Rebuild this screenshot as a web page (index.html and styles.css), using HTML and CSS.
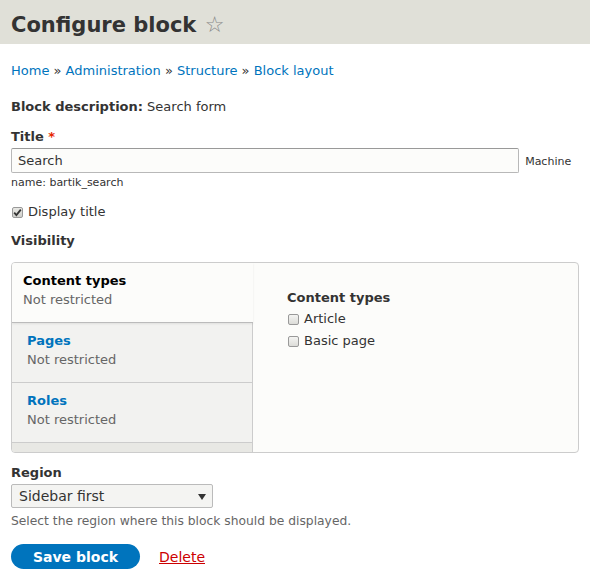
FILE: index.html
```html
<!DOCTYPE html>
<html lang="en">
<head>
  <meta charset="UTF-8">
  <title>Configure block</title>
  <link rel="stylesheet" href="styles.css">
</head>
<body>
  <div class="page-header">
    <h1>Configure block <span class="star">&#9734;</span></h1>
  </div>
  <div class="content">
    <div class="breadcrumb">
      <a href="#">Home</a> &raquo; <a href="#">Administration</a> &raquo; <a href="#">Structure</a> &raquo; <a href="#">Block layout</a>
    </div>

    <div class="item"><strong>Block description:</strong> Search form</div>

    <div class="form-item">
      <label class="label">Title <span class="req">*</span></label>
      <div class="title-line">
        <input type="text" class="text" value="Search">
        <span class="machine">Machine name: bartik_search</span>
      </div>
    </div>

    <div class="check-line">
      <span class="cbox checked"><svg width="9" height="9" viewBox="0 0 9 9"><path d="M1.2 4.6 L3.4 7 L7.8 1.6" fill="none" stroke="#333" stroke-width="1.8"/></svg></span>
      <label>Display title</label>
    </div>

    <div class="label vis">Visibility</div>

    <div class="vtabs">
      <ul class="vtabs-menu">
        <li class="tab selected"><strong>Content types</strong><span>Not restricted</span></li>
        <li class="tab"><strong>Pages</strong><span>Not restricted</span></li>
        <li class="tab"><strong>Roles</strong><span>Not restricted</span></li>
      </ul>
      <div class="vtabs-pane">
        <div class="pane-title">Content types</div>
        <div class="opt"><span class="cbox"></span><label>Article</label></div>
        <div class="opt"><span class="cbox"></span><label>Basic page</label></div>
      </div>
    </div>

    <div class="form-item region">
      <label class="label">Region</label>
      <div class="select">Sidebar first <span class="arrow"></span></div>
      <div class="desc">Select the region where this block should be displayed.</div>
    </div>

    <div class="actions">
      <button class="btn">Save block</button>
      <a href="#" class="delete">Delete</a>
    </div>
  </div>
</body>
</html>
```

FILE: styles.css
```css
body { margin: 0; font-family: "DejaVu Sans", sans-serif; font-size: 13px; color: #333; background: #fff; }
a { color: #0074bd; text-decoration: none; }
.page-header { background: #e0e0d8; height: 44px; padding: 0 11px; }
.page-header h1 { margin: 0; font-size: 21px; font-weight: bold; line-height: 49px; color: #333; }
.star { font-weight: normal; color: #888; font-size: 22px; margin-left: 1px; }
.content { padding: 0 11px; }
.breadcrumb { margin-top: 19px; line-height: 16px; color: #333; }
.item { margin-top: 20px; line-height: 16px; }
.item strong { font-weight: bold; }
.form-item { margin-top: 14px; }
.label { display: block; font-weight: bold; line-height: 16px; }
.req { color: #e62600; }
.title-line { margin-top: 3px; line-height: 18px; }
.text { width: 508px; height: 25px; box-sizing: border-box; margin: 0; padding: 2px 6px; font: 13px "DejaVu Sans", sans-serif; color: #333; background: #fcfcfa; border: 1px solid #b8b8b8; border-top-color: #999; border-radius: 2px; vertical-align: baseline; }
.machine { font-size: 11px; margin-left: 2px; }
.cbox { display: inline-flex; align-items: center; justify-content: center; box-sizing: border-box; width: 11px; height: 11px; margin: 0 5px 0 1px; border: 1px solid #999; border-radius: 2px; background: linear-gradient(#f4f4f2, #dcdcd8); }
.cbox.checked { background: linear-gradient(#e8e8e4, #cfcfcb); }
.check-line { margin-top: 12px; display: flex; align-items: center; line-height: 16px; }
.vis { margin-top: 13px; }
.vtabs { display: flex; margin-top: 13px; width: 566px; height: 189px; border: 1px solid #ccc; border-radius: 4px; background: #fcfcfa; overflow: hidden; }
.vtabs-menu { list-style: none; margin: 0; padding: 0; width: 240px; background: #e8e8e4; border-right: 1px solid #ccc; }
.tab { display: block; box-sizing: border-box; height: 60px; padding: 8px 15px 9px; background: #f2f2f0; border-bottom: 1px solid #ccc; line-height: 19px; }
.tab strong { display: block; color: #0074bd; }
.tab span { display: block; color: #666; }
.tab.selected { background: #fcfcfa; margin-right: -1px; padding: 8px 11px 9px; border-bottom: 1px solid #bbb; box-shadow: 0 1px 2px rgba(0,0,0,0.08); position: relative; }
.tab.selected strong { color: #000; }
.vtabs-pane { padding: 26px 34px; }
.pane-title { font-weight: bold; color: #333; line-height: 17px; margin-bottom: 2px; }
.opt { display: flex; align-items: center; line-height: 22px; }
.region { margin-top: 12px; }
.select { box-sizing: border-box; width: 202px; height: 24px; margin-top: 3px; padding: 0 7px; line-height: 22px; font-size: 14px; background: #f4f4f2; border: 1px solid #bbb; border-radius: 2px; position: relative; color: #333; }
.arrow { position: absolute; right: 6px; top: 9px; border-left: 4px solid transparent; border-right: 4px solid transparent; border-top: 6px solid #333; }
.desc { margin-top: 6px; font-size: 12.3px; color: #666; line-height: 15px; }
.actions { margin-top: 15px; display: flex; align-items: center; }
.btn { width: 129px; height: 25px; border: none; border-radius: 20px; background: #0074bd; color: #fff; font: bold 14px "DejaVu Sans", sans-serif; cursor: pointer; }
.delete { margin-left: 19px; color: #c00; text-decoration: underline; font-size: 14px; }
```
